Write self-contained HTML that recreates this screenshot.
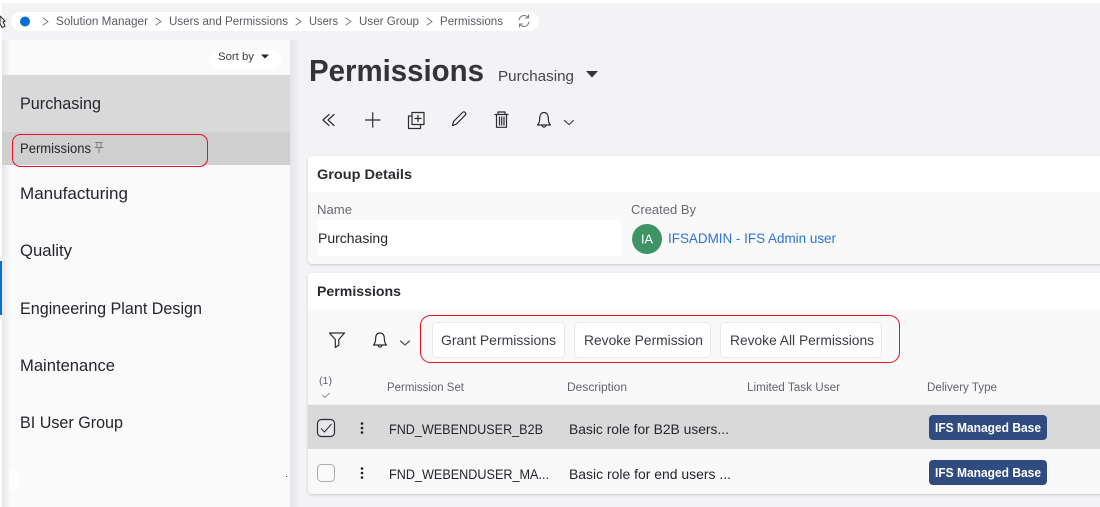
<!DOCTYPE html>
<html><head><meta charset="utf-8"><title>Permissions</title>
<style>
html,body{margin:0;padding:0;width:1100px;height:507px;overflow:hidden;background:#f3f2f5}
svg{display:block}
text{font-family:"Liberation Sans",sans-serif;fill:#24262e}
.b{font-weight:700}
.h{font-size:11.5px;fill:#63646e}
.c{font-size:14px}
.n{font-size:16.5px}
.l{font-size:12.5px;fill:#6a6a72}
.bt{font-size:14px;fill:#3a3c46}
.bd{font-size:12.5px;font-weight:700;fill:#fff}
.i{fill:none;stroke:#2b2b3a;stroke-width:1.2;stroke-linecap:round;stroke-linejoin:round}
</style></head><body>
<svg width="1100" height="507" viewBox="0 0 1100 507" xmlns="http://www.w3.org/2000/svg">
<defs>
<linearGradient id="ls" x1="0" x2="1" y1="0" y2="0"><stop offset="0" stop-color="#e6e5e8"/><stop offset="1" stop-color="#fafafa"/></linearGradient>
<linearGradient id="rs" x1="0" x2="1" y1="0" y2="0"><stop offset="0" stop-color="#e6e4e8"/><stop offset="1" stop-color="#f3f2f5"/></linearGradient>
<filter id="sh" x="-2%" y="-5%" width="104%" height="112%"><feDropShadow dx="0" dy="1" stdDeviation="1.2" flood-color="#000" flood-opacity=".17"/></filter>
</defs>
<rect width="1100" height="507" fill="#f3f2f5"/>
<rect width="1100" height="3" fill="#fff"/>
<rect width="2" height="507" fill="#fff"/>

<!-- breadcrumb -->
<rect x="11" y="12" width="528" height="19" rx="9.5" fill="#fff"/>
<circle cx="25" cy="21.5" r="5" fill="#0b6fd0"/>
<g class="i" style="stroke:#777;stroke-width:1">
<path d="M43 18l5 3.5-5 3.5M156 18l5 3.5-5 3.5M296 18l5 3.5-5 3.5M346 18l5 3.5-5 3.5M427 18l5 3.5-5 3.5"/>
<path d="M519 20c.5-3 3-4.500 5-4.500 1.800 0 3 .6 4 1.800M528.500 15v3h-3M529 22c-.5 3-3 4.500-5 4.500-1.800 0-3-.6-4-1.800M519.500 27v-3h3"/>
</g>
<g style="font-size:11.5px">
<text x="56" y="25" textLength="92" lengthAdjust="spacingAndGlyphs" style="fill:#5a5b63">Solution Manager</text>
<text x="169" y="25" textLength="119" lengthAdjust="spacingAndGlyphs" style="fill:#5a5b63">Users and Permissions</text>
<text x="309" y="25" textLength="29" lengthAdjust="spacingAndGlyphs" style="fill:#5a5b63">Users</text>
<text x="359" y="25" textLength="60" lengthAdjust="spacingAndGlyphs" style="fill:#5a5b63">User Group</text>
<text x="440" y="25" textLength="63" lengthAdjust="spacingAndGlyphs" style="fill:#5a5b63">Permissions</text>
</g>
<path d="M0 16l5 5-2 1 2 4-3 1.500-2-4z" fill="#fff" stroke="#222" stroke-width="1"/>

<!-- sidebar -->
<rect x="290" y="40" width="11" height="467" fill="url(#rs)"/>
<rect x="2" y="40" width="288" height="467" fill="#fafafa"/>
<rect x="2" y="40" width="8" height="467" fill="url(#ls)"/>
<rect x="209" y="50" width="72" height="19" rx="9.500" fill="#fff"/>
<text x="218" y="60" textLength="36" lengthAdjust="spacingAndGlyphs" style="font-size:11px;fill:#3a3a42">Sort by</text>
<path d="M261 54.500h8l-4 4z" fill="#222"/>
<rect x="2" y="75" width="288" height="57" fill="#d9d9d9"/>
<rect x="2" y="132" width="288" height="33" fill="#cfcfcf"/>
<text class="n" x="20" y="109" textLength="81" lengthAdjust="spacingAndGlyphs">Purchasing</text>
<text x="20" y="153" textLength="71" lengthAdjust="spacingAndGlyphs" style="font-size:13.500px">Permissions</text>
<path d="M95.500 142.500h7M97 142.500v5M101 142.500v5M95 147.500h8M99 147.500v5" class="i" style="stroke:#666;stroke-width:.8"/>
<rect x="12.500" y="134.500" width="195" height="32" rx="8" fill="none" stroke="#e8101c" stroke-width="1"/>
<text class="n" x="20" y="199" textLength="108" lengthAdjust="spacingAndGlyphs">Manufacturing</text>
<text class="n" x="20" y="256" textLength="52" lengthAdjust="spacingAndGlyphs">Quality</text>
<text class="n" x="20" y="314" textLength="182" lengthAdjust="spacingAndGlyphs">Engineering Plant Design</text>
<text class="n" x="20" y="371" textLength="95" lengthAdjust="spacingAndGlyphs">Maintenance</text>
<text class="n" x="20" y="428" textLength="103" lengthAdjust="spacingAndGlyphs">BI User Group</text>
<rect x="0" y="261" width="2" height="54" fill="#0b6fd0"/>
<rect x="9" y="470" width="9" height="21" fill="#fdfdfd"/>
<rect x="286" y="476" width="1" height="1" fill="#333"/>

<!-- title -->
<text x="309" y="81" textLength="175" lengthAdjust="spacingAndGlyphs" style="font-size:31px;fill:#33343a;font-weight:700">Permissions</text>
<text x="498" y="81" textLength="76" lengthAdjust="spacingAndGlyphs" style="font-size:14.500px;fill:#44454d">Purchasing</text>
<path d="M586 71h12l-6 6.500z" fill="#33343a"/>

<!-- toolbar -->
<g class="i">
<path d="M329 114.500l-6 5.500 6 5.500M334 114.500l-6 5.500 6 5.500"/>
<path d="M365.500 120h14.500M372.700 112.700v14.500"/>
<path d="M412 112.500h12v12h-12zM412 116h-3.500v12.500h12V124.500M418 115.500v6M415 118.500h6"/>
<path d="M452.500 125.500l1-4 9-9c1-1 2-.8 2.700 0s.8 1.800 0 2.700l-9 9z"/>
<path d="M495 114.500h13M498 114.500v-2.500h7v2.500M496.500 114.500v12.800h10v-12.800M499.500 117v8M501.700 117v8M504 117v8"/>
<path d="M537.500 125c1.600-1.500 2.200-3 2.200-6.500 0-3.500 1.400-6 4.300-6s4.300 2.500 4.300 6c0 3.500.6 5 2.200 6.500zM542 125c0 2.800 4 2.800 4 0"/>
<path d="M564.500 120.500l4.500 4 4.500-4" style="stroke:#555"/>
</g>

<!-- group details card -->
<g filter="url(#sh)"><rect x="308" y="156" width="800" height="108" rx="4" fill="#f9f9f9"/></g>
<path d="M308 192v-32a4 4 0 0 1 4-4h788v36z" fill="#fff"/>
<text x="317" y="179" textLength="95" lengthAdjust="spacingAndGlyphs" style="font-size:14px;font-weight:700;fill:#2b2c33">Group Details</text>
<text class="l" x="317" y="214" textLength="35" lengthAdjust="spacingAndGlyphs">Name</text>
<text class="l" x="631" y="214" textLength="65" lengthAdjust="spacingAndGlyphs">Created By</text>
<rect x="318" y="220" width="303" height="36" fill="#fff"/>
<text class="c" x="318" y="243" textLength="70" lengthAdjust="spacingAndGlyphs">Purchasing</text>
<circle cx="647" cy="239" r="15" fill="#3f9466"/>
<text x="641" y="243.500" textLength="12" lengthAdjust="spacingAndGlyphs" style="font-size:12.500px;fill:#fff">IA</text>
<text x="668" y="243" textLength="168" lengthAdjust="spacingAndGlyphs" style="font-size:14px;fill:#2d74d8">IFSADMIN - IFS Admin user</text>

<!-- permissions card -->
<g filter="url(#sh)"><rect x="308" y="273" width="800" height="221" rx="4" fill="#f9f9f9"/></g>
<path d="M308 309v-32a4 4 0 0 1 4-4h788v36z" fill="#fff"/>
<text x="317" y="296" textLength="84" lengthAdjust="spacingAndGlyphs" style="font-size:14px;font-weight:700;fill:#2b2c33">Permissions</text>

<g class="i">
<path d="M329.500 333h15l-5.700 6.500v5.500l-3.500 2.500v-8z"/>
<path d="M373.500 345c1.500-1.500 2.100-3 2.100-6 0-3.500 1.400-6 4.400-6s4.400 2.500 4.400 6c0 3 .6 4.500 2.100 6zM378 345c0 2.700 4 2.700 4 0"/>
<path d="M400.500 341l4.500 4 4.500-4" style="stroke:#555"/>
</g>

<rect x="420.500" y="315.500" width="479" height="47" rx="10" fill="none" stroke="#e8101c" stroke-width="1"/>
<rect x="432.500" y="322.500" width="132" height="35" rx="4" fill="#fff" stroke="#e9e9ec"/>
<rect x="574.500" y="322.500" width="136" height="35" rx="4" fill="#fff" stroke="#e9e9ec"/>
<rect x="720.500" y="322.500" width="161" height="35" rx="4" fill="#fff" stroke="#e9e9ec"/>
<text class="bt" x="441" y="345" textLength="115" lengthAdjust="spacingAndGlyphs">Grant Permissions</text>
<text class="bt" x="584" y="345" textLength="119" lengthAdjust="spacingAndGlyphs">Revoke Permission</text>
<text class="bt" x="730" y="345" textLength="144" lengthAdjust="spacingAndGlyphs">Revoke All Permissions</text>

<text class="h" x="319" y="384" textLength="13" lengthAdjust="spacingAndGlyphs" style="font-size:10px">(1)</text>
<path d="M322.500 395l2.500 2.500 4.500-4.500" fill="none" stroke="#8a8a96" stroke-width=".9"/>
<text class="h" x="387" y="391" textLength="77" lengthAdjust="spacingAndGlyphs">Permission Set</text>
<text class="h" x="567" y="391" textLength="60" lengthAdjust="spacingAndGlyphs">Description</text>
<text class="h" x="747" y="391" textLength="93" lengthAdjust="spacingAndGlyphs">Limited Task User</text>
<text class="h" x="927" y="391" textLength="70" lengthAdjust="spacingAndGlyphs">Delivery Type</text>

<rect x="308" y="404.500" width="792" height="1" fill="#e5e5e5"/>
<rect x="308" y="405" width="792" height="44" fill="#d9d9d9"/>
<rect x="317.500" y="419.500" width="17" height="17" rx="4" fill="#e8e8e8" stroke="#2b2b36" stroke-width="1.200"/>
<path d="M321 428.500l3.500 3.500 7-8" fill="none" stroke="#2b2b36" stroke-width="1"/>
<rect x="317.500" y="464.500" width="17" height="17" rx="4" fill="#fafafa" stroke="#a9a9ae" stroke-width="1"/>
<g fill="#1c1c28">
<circle cx="362" cy="423.500" r="1.300"/><circle cx="362" cy="428" r="1.300"/><circle cx="362" cy="432.500" r="1.300"/>
<circle cx="362" cy="468.500" r="1.300"/><circle cx="362" cy="473" r="1.300"/><circle cx="362" cy="477.500" r="1.300"/>
</g>
<text class="c" x="389" y="434" textLength="154" lengthAdjust="spacingAndGlyphs">FND_WEBENDUSER_B2B</text>
<text class="c" x="389" y="479" textLength="160" lengthAdjust="spacingAndGlyphs">FND_WEBENDUSER_MA...</text>
<text class="c" x="569" y="434" textLength="160" lengthAdjust="spacingAndGlyphs">Basic role for B2B users...</text>
<text class="c" x="569" y="479" textLength="162" lengthAdjust="spacingAndGlyphs">Basic role for end users ...</text>
<rect x="929" y="415" width="118" height="25" rx="4" fill="#2f4b80"/>
<rect x="929" y="460" width="118" height="25" rx="4" fill="#2f4b80"/>
<text class="bd" x="935" y="432" textLength="106" lengthAdjust="spacingAndGlyphs">IFS Managed Base</text>
<text class="bd" x="935" y="477" textLength="106" lengthAdjust="spacingAndGlyphs">IFS Managed Base</text>
</svg>
</body></html>
